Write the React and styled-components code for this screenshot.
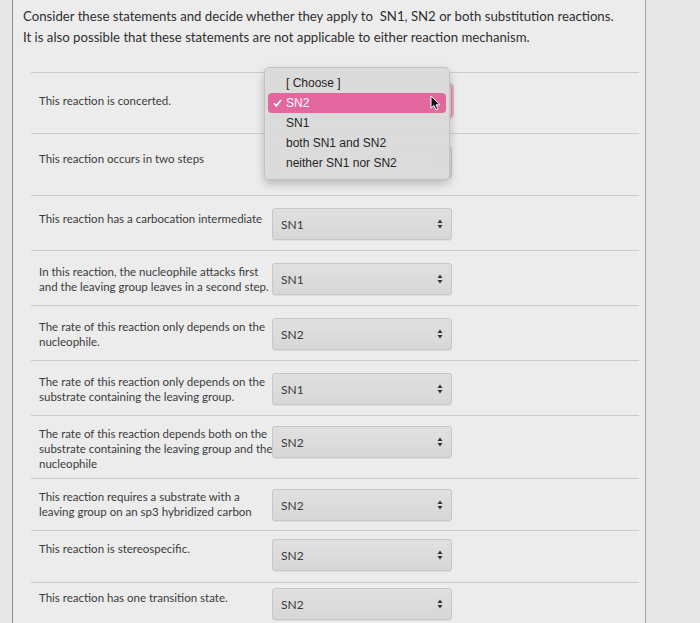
import { createGlobalStyle } from 'styled-components'
import styled from 'styled-components'

const GlobalStyle = createGlobalStyle`
    html, body {
        margin: 0;
        padding: 0;
        background-color: #e6e6e6;
        font-family: Lato, "Open Sans", sans-serif;
    }
`

const Page = styled.div`
    width: 700px;
    height: 623px;
    overflow: hidden;
    background-color: #e7e7e7;
    position: relative;
`

const Sheet = styled.div`
    margin-left: 12px;
    width: 634px;
    min-height: 623px;
    box-sizing: border-box;
    border-left: 1px solid #8e8e8e;
    border-right: 1px solid #a4a4a4;
    background-color: #ececec;
    padding: 6px 0 0 10px;
`

const Title = styled.p`
    margin: 0;
    font-size: 13.2px;
    line-height: 21px;
    color: #2f2f2f;
    white-space: nowrap;
`

const List = styled.div`
    margin: 24px 6px 0 8px;
`

const Row = styled.div`
    display: grid;
    grid-template-columns: 231px 180px;
    column-gap: 2px;
    align-items: start;
    border-top: 1px solid #cbcbcb;
    padding: ${p => p.$pad ?? 12}px 0 0 8px;
    min-height: ${p => p.$h}px;
    box-sizing: border-box;
`

const Label = styled.div`
    font-size: 11.5px;
    line-height: 15px;
    color: #3b3b3b;
    padding-top: ${p => p.$top ?? 6}px;
    margin-right: -6px;
`

const SelectBox = styled.div`
    position: relative;
    height: 32px;
    box-sizing: border-box;
    display: flex;
    align-items: center;
    justify-content: space-between;
    padding: 0 8px 0 8px;
    background: linear-gradient(#e0e0e0, #d7d7d7);
    border: 1px solid ${p => (p.$focused ? '#e283b0' : '#c7c7c7')};
    border-radius: 3px;
    box-shadow: ${p => (p.$focused ? '0 0 0 2px rgba(226, 120, 170, 0.55)' : '0 1px 0 rgba(0,0,0,0.06)')};
    font-size: 12px;
    color: #3a3a3a;
`

const Menu = styled.div`
    position: absolute;
    left: -9px;
    top: -19px;
    width: 186px;
    box-sizing: border-box;
    padding: 5px 3px 6px;
    background-color: rgba(218, 218, 218, 0.98);
    border: 1px solid #c2c2c2;
    border-radius: 5px;
    box-shadow: 0 4px 10px rgba(0, 0, 0, 0.22);
    font-family: "Liberation Sans", Arial, sans-serif;
    z-index: 5;
`

const MenuItem = styled.div`
    height: 20px;
    display: flex;
    align-items: center;
    padding-left: 18px;
    position: relative;
    border-radius: 4px;
    font-size: 12px;
    color: ${p => (p.$active ? '#ffffff' : '#262626')};
    background-color: ${p => (p.$active ? '#e2679f' : 'transparent')};
`

const Check = styled.svg`
    position: absolute;
    left: 5px;
    top: 6px;
`

const Cursor = styled.svg`
    position: absolute;
    left: 165px;
    top: 27px;
`

const Arrows = () => (
    <svg width="6" height="10" viewBox="0 0 6 10">
        <path d="M3 0.5 L5.5 4 L0.5 4 Z" fill="#333" />
        <path d="M3 9.5 L5.5 6 L0.5 6 Z" fill="#333" />
    </svg>
)

const rows = [
    { text: 'This reaction is concerted.', value: 'SN2', h: 61, top: 8, focused: true },
    { text: 'This reaction occurs in two steps', value: '', h: 62, top: 5 },
    { text: 'This reaction has a carbocation intermediate', value: 'SN1', h: 55, top: 3 },
    { text: 'In this reaction, the nucleophile attacks first and the leaving group leaves in a second step.', value: 'SN1', h: 55, top: 1 },
    { text: 'The rate of this reaction only depends on the nucleophile.', value: 'SN2', h: 55, top: 1 },
    { text: 'The rate of this reaction only depends on the substrate containing the leaving group.', value: 'SN1', h: 55, top: 1 },
    { text: 'The rate of this reaction depends both on the substrate containing the leaving group and the nucleophile', value: 'SN2', h: 63, top: -2, pad: 10 },
    { text: 'This reaction requires a substrate with a leaving group on an sp3 hybridized carbon', value: 'SN2', h: 52, top: 0, pad: 10 },
    { text: 'This reaction is stereospecific.', value: 'SN2', h: 52, top: 2, pad: 8 },
    { text: 'This reaction has one transition state.', value: 'SN2', h: 45, top: 2, pad: 5 },
]

const options = ['[ Choose ]', 'SN2', 'SN1', 'both SN1 and SN2', 'neither SN1 nor SN2']

const DropdownMenu = () => (
    <Menu>
        {options.map(o => (
            <MenuItem key={o} $active={o === 'SN2'}>
                {o === 'SN2' && (
                    <Check width="9" height="8" viewBox="0 0 9 8">
                        <path d="M1 4.2 L3.4 6.8 L8 1" fill="none" stroke="#fff" strokeWidth="1.6" />
                    </Check>
                )}
                {o}
            </MenuItem>
        ))}
        <Cursor width="11" height="16" viewBox="0 0 11 16">
            <path d="M1 1 L1 13 L4 10.5 L6 15 L8 14 L6 9.8 L10 9.8 Z" fill="#111" stroke="#fff" strokeWidth="1" />
        </Cursor>
    </Menu>
)

const App = () => {
    return (
        <Page>
            <GlobalStyle />
            <Sheet>
                <Title>
                    Consider these statements and decide whether they apply to&nbsp; SN1, SN2 or both substitution reactions.
                    <br />
                    It is also possible that these statements are not applicable to either reaction mechanism.
                </Title>
                <List>
                    {rows.map((r, i) => (
                        <Row key={i} $h={r.h} $pad={r.pad}>
                            <Label $top={r.top}>{r.text}</Label>
                            <SelectBox $focused={r.focused}>
                                <span>{r.focused ? '' : r.value}</span>
                                <Arrows />
                                {r.focused && <DropdownMenu />}
                            </SelectBox>
                        </Row>
                    ))}
                </List>
            </Sheet>
        </Page>
    )
}

export default App
